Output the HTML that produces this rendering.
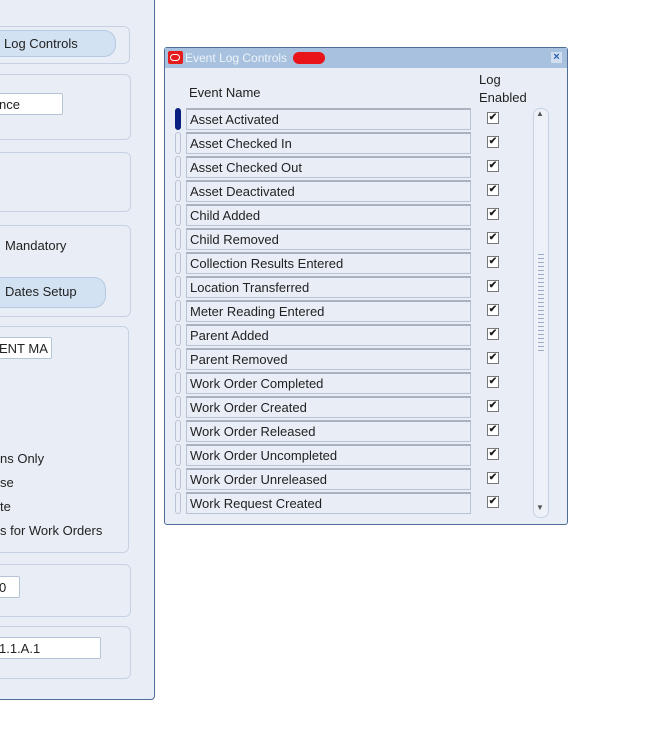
<!DOCTYPE html><html><head><style>
body{margin:0;width:669px;height:750px;background:#fff;position:relative;overflow:hidden;font-family:"Liberation Sans",Arial,sans-serif;font-size:13px;color:#222}
.a{position:absolute}
.lp{left:-10px;top:-10px;width:163px;height:708px;background:#e9eef6;border:1px solid #4f6d99;border-radius:0 0 4px 0}
.sec{position:absolute;left:-10px;border:1px solid #c6d2e3;border-radius:6px;background:#e9eef6}
.inp{position:absolute;background:#fff;border:1px solid #b7c4d6;border-radius:2px;height:22px;line-height:22px;box-sizing:border-box;padding-left:3px}
.btn{position:absolute;background:#d3e2f3;border:1px solid #b6c9e1;border-radius:12px;box-sizing:border-box;line-height:28px}
.t{position:absolute;white-space:nowrap}
.dlg{left:164px;top:47px;width:402px;height:476px;background:#e9eef6;border:1px solid #4f6d99;border-radius:3px}
.row{position:absolute;left:21px;width:285px;height:22px;box-sizing:border-box;border:1px solid #b8c4d4;border-top:2px solid #a9b3c0;background:#e9eef6;line-height:19px;padding-left:3px;font-size:13px}
.ind{position:absolute;left:10px;width:6px;height:22px;box-sizing:border-box;border:1px solid #b8c4d4;border-radius:3px}
.cb{position:absolute;left:322px;width:10px;height:10px;border:1px solid #777;background:#fff;font-size:10px;line-height:10px;text-align:center;font-weight:bold}
</style></head><body>
<div class="a lp"></div>
<div class="sec" style="top:26px;width:138px;height:36px"></div>
<div class="btn" style="left:-10px;top:30px;width:126px;height:27px;line-height:25px;padding-left:13px">Log Controls</div>
<div class="sec" style="top:74px;width:139px;height:64px"></div>
<div class="inp" style="left:-5px;top:93px;width:68px">nce</div>
<div class="sec" style="top:152px;width:139px;height:58px"></div>
<div class="sec" style="top:225px;width:139px;height:90px"></div>
<div class="t" style="left:5px;top:238px">Mandatory</div>
<div class="btn" style="left:-10px;top:277px;width:116px;height:31px;padding-left:14px">Dates Setup</div>
<div class="sec" style="top:326px;width:137px;height:225px"></div>
<div class="inp" style="left:-5px;top:337px;width:57px">ENT MA</div>
<div class="t" style="left:0;top:451px">ns Only</div>
<div class="t" style="left:0;top:475px">se</div>
<div class="t" style="left:0;top:499px">te</div>
<div class="t" style="left:0;top:523px">s for Work Orders</div>
<div class="sec" style="top:564px;width:139px;height:51px"></div>
<div class="inp" style="left:-5px;top:576px;width:25px">0</div>
<div class="sec" style="top:626px;width:139px;height:51px"></div>
<div class="inp" style="left:-5px;top:637px;width:106px">1.1.A.1</div>

<div class="a dlg">
<div class="a" style="left:0;top:0;width:402px;height:20px;background:#a7c1de"></div>
<div class="a" style="left:3px;top:3px;width:15px;height:13px;background:#e51c1c;border-radius:2px"><div class="a" style="left:2px;top:3px;width:8px;height:5px;border:1px solid #fff;border-radius:4px"></div></div>
<div class="t" style="left:20px;top:3px;color:#eef3f9;font-size:12px">Event Log Controls</div>
<div class="a" style="left:128px;top:4px;width:32px;height:12px;background:#e8141a;border-radius:6px"></div>
<div class="a" style="left:386px;top:4px;width:11px;height:11px;background:#d0def0;color:#2a60b0;font-size:11px;line-height:11px;text-align:center;font-weight:bold">×</div>
<div class="t" style="left:24px;top:37px;font-size:13px">Event Name</div>
<div class="t" style="left:314px;top:23px;line-height:18px">Log<br>Enabled</div>
<div class="a" style="left:368px;top:60px;width:14px;height:408px;border:1px solid #c6d2e3;border-radius:7px;background:#eef2f8"></div>
<div class="t" style="left:371px;top:61px;font-size:8px;color:#555">▲</div>
<div class="t" style="left:371px;top:455px;font-size:8px;color:#555">▼</div>
<div class="a" style="left:373px;top:203px;width:6px;height:100px;background:repeating-linear-gradient(#eef2f8 0 3px,#9aaccc 3px 4px)"></div>
<div id="rows"></div>
</div>
<script>
var n=["Asset Activated","Asset Checked In","Asset Checked Out","Asset Deactivated","Child Added","Child Removed","Collection Results Entered","Location Transferred","Meter Reading Entered","Parent Added","Parent Removed","Work Order Completed","Work Order Created","Work Order Released","Work Order Uncompleted","Work Order Unreleased","Work Request Created"],h="";
n.forEach(function(s,i){var y=60+i*24;h+='<div class="ind" style="top:'+y+'px;'+(i==0?'background:#0b1f80;border-color:#0b1f80':'')+'"></div><div class="row" style="top:'+y+'px">'+s+'</div><div class="cb" style="top:'+(y+4)+'px">✔</div>';});
document.getElementById("rows").outerHTML=h;
</script>
</body></html>
